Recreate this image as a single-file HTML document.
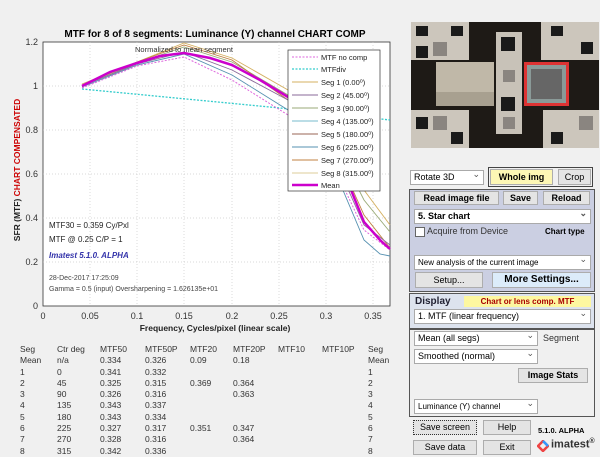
<!DOCTYPE html>
<html><head><style>
body{margin:0;width:600px;height:457px;background:#f0f0f0;font-family:"Liberation Sans",sans-serif;position:relative;overflow:hidden}
.a{position:absolute;white-space:nowrap}
.sel{position:absolute;background:#fff;border:1px solid #aaa;font-size:9px;line-height:13px;padding-left:3px;box-sizing:border-box}
.sel:after{content:"⌄";position:absolute;right:3px;top:-3px;font-size:9px;color:#555}
.btn{position:absolute;background:#e4e4e4;border:1px solid #adadad;font-size:9px;text-align:center;box-sizing:border-box}
.t{position:absolute;font-size:8.5px;color:#333}
</style></head><body>
<svg class="a" style="left:0;top:0" width="405" height="340" font-family="Liberation Sans">
<text x="215" y="37" font-size="10" font-weight="bold" text-anchor="middle">MTF for 8 of 8 segments:  Luminance (Y) channel  CHART COMP</text>
<rect x="43" y="42" width="347" height="264" fill="#fff" stroke="#333" stroke-width="0.8"/>
<g stroke="#ccc" stroke-dasharray="1,2" stroke-width="0.7">
<line x1="90" y1="42" x2="90" y2="306"/><line x1="137" y1="42" x2="137" y2="306"/><line x1="184" y1="42" x2="184" y2="306"/><line x1="232" y1="42" x2="232" y2="306"/><line x1="279" y1="42" x2="279" y2="306"/><line x1="326" y1="42" x2="326" y2="306"/><line x1="373" y1="42" x2="373" y2="306"/>
<line x1="43" y1="86" x2="390" y2="86"/><line x1="43" y1="130" x2="390" y2="130"/><line x1="43" y1="174" x2="390" y2="174"/><line x1="43" y1="218" x2="390" y2="218"/><line x1="43" y1="262" x2="390" y2="262"/></g>
<g font-size="9" fill="#333" text-anchor="end"><text x="38" y="45">1.2</text><text x="38" y="89">1</text><text x="38" y="133">0.8</text><text x="38" y="177">0.6</text><text x="38" y="221">0.4</text><text x="38" y="265">0.2</text><text x="38" y="309">0</text></g>
<g font-size="9" fill="#333" text-anchor="middle"><text x="43" y="319">0</text><text x="90" y="319">0.05</text><text x="137" y="319">0.1</text><text x="184" y="319">0.15</text><text x="232" y="319">0.2</text><text x="279" y="319">0.25</text><text x="326" y="319">0.3</text><text x="373" y="319">0.35</text></g>
<text x="215" y="331" font-size="8.5" font-weight="bold" text-anchor="middle" fill="#222">Frequency, Cycles/pixel (linear scale)</text>
<text transform="translate(20,170) rotate(-90)" font-size="8.5" font-weight="bold" text-anchor="middle"><tspan fill="#222">SFR (MTF)  </tspan><tspan fill="#c00">CHART COMPENSATED</tspan></text>
<polyline fill="none" stroke="#3cc" stroke-width="1.3" stroke-dasharray="2,1.5" points="82,89 280,108 390,120"/>
<polyline fill="none" stroke="#d4b060" stroke-width="0.9" points="82,84 137,62 184,43 232,58 288,90 326,120 364,190 390,225"/>
<polyline fill="none" stroke="#9a7" stroke-width="0.9" points="82,86 137,63 184,47 232,62 288,95 326,125 364,200 390,232"/>
<polyline fill="none" stroke="#c08040" stroke-width="0.9" points="82,85 137,62 184,45 232,60 288,100 326,130 364,215 390,248"/>
<polyline fill="none" stroke="#5590b0" stroke-width="0.9" points="82,87 137,65 184,54 232,75 288,110 326,150 364,240 380,254 390,256"/>
<polyline fill="none" stroke="#8a6a9a" stroke-width="0.9" points="82,86 137,64 184,52 232,70 288,100 326,140 364,225 390,245"/>
<polyline fill="none" stroke="#d6d" stroke-width="1" stroke-dasharray="2,1.5" points="82,88 137,66 184,57 232,80 288,115 326,150 364,230 390,250"/>
<polyline fill="none" stroke="#c0c" stroke-width="2.5" points="82,86 110,72 137,63 160,56 184,53 210,58 232,65 260,80 288,97 310,125 326,141 345,175 364,222 380,240 390,249"/>
<text x="135" y="52" font-size="7.5" fill="#333">Normalized to mean segment</text>
<rect x="288" y="50" width="92" height="141" fill="#fff" stroke="#333" stroke-width="0.7"/>
<g font-size="7.5" fill="#222">
<line x1="292" y1="57" x2="318" y2="57" stroke="#d6d" stroke-dasharray="2,1.5"/><text x="321" y="60">MTF no comp</text>
<line x1="292" y1="69" x2="318" y2="69" stroke="#3cc" stroke-width="1.3" stroke-dasharray="2,1.5"/><text x="321" y="72">MTFdiv</text>
<line x1="292" y1="82" x2="318" y2="82" stroke="#d4b060"/><text x="321" y="85">Seg 1 (0.00⁰)</text>
<line x1="292" y1="95" x2="318" y2="95" stroke="#8a6a9a"/><text x="321" y="98">Seg 2 (45.00⁰)</text>
<line x1="292" y1="108" x2="318" y2="108" stroke="#9a7"/><text x="321" y="111">Seg 3 (90.00⁰)</text>
<line x1="292" y1="121" x2="318" y2="121" stroke="#7bc"/><text x="321" y="124">Seg 4 (135.00⁰)</text>
<line x1="292" y1="134" x2="318" y2="134" stroke="#965"/><text x="321" y="137">Seg 5 (180.00⁰)</text>
<line x1="292" y1="147" x2="318" y2="147" stroke="#5590b0"/><text x="321" y="150">Seg 6 (225.00⁰)</text>
<line x1="292" y1="160" x2="318" y2="160" stroke="#c08040"/><text x="321" y="163">Seg 7 (270.00⁰)</text>
<line x1="292" y1="173" x2="318" y2="173" stroke="#dc9"/><text x="321" y="176">Seg 8 (315.00⁰)</text>
<line x1="292" y1="185" x2="318" y2="185" stroke="#c0c" stroke-width="2.5"/><text x="321" y="188">Mean</text></g>
<text x="49" y="228" font-size="8" fill="#222">MTF30 = 0.359 Cy/Pxl</text>
<text x="49" y="242" font-size="8" fill="#222">MTF @ 0.25 C/P = 1</text>
<text x="49" y="258" font-size="8" fill="#33a" font-weight="bold" font-style="italic">Imatest 5.1.0. ALPHA</text>
<text x="49" y="280" font-size="7" fill="#444">28-Dec-2017 17:25:09</text>
<text x="49" y="291" font-size="7" fill="#444">Gamma = 0.5 (input)  Oversharpening = 1.626135e+01</text>
</svg>
<div class="t" style="left:20px;top:344px;line-height:11.3px">Seg<br>Mean<br>1<br>2<br>3<br>4<br>5<br>6<br>7<br>8</div>
<div class="t" style="left:57px;top:344px;line-height:11.3px">Ctr deg<br>n/a<br>0<br>45<br>90<br>135<br>180<br>225<br>270<br>315</div>
<div class="t" style="left:100px;top:344px;line-height:11.3px">MTF50<br>0.334<br>0.341<br>0.325<br>0.326<br>0.343<br>0.343<br>0.327<br>0.328<br>0.342</div>
<div class="t" style="left:145px;top:344px;line-height:11.3px">MTF50P<br>0.326<br>0.332<br>0.315<br>0.316<br>0.337<br>0.334<br>0.317<br>0.316<br>0.336</div>
<div class="t" style="left:190px;top:344px;line-height:11.3px">MTF20<br>0.09<br>&nbsp;<br>0.369<br>&nbsp;<br>&nbsp;<br>&nbsp;<br>0.351</div>
<div class="t" style="left:233px;top:344px;line-height:11.3px">MTF20P<br>0.18<br>&nbsp;<br>0.364<br>0.363<br>&nbsp;<br>&nbsp;<br>0.347<br>0.364</div>
<div class="t" style="left:278px;top:344px">MTF10</div>
<div class="t" style="left:322px;top:344px">MTF10P</div>
<div class="t" style="left:368px;top:344px;line-height:11.3px">Seg<br>Mean<br>1<br>2<br>3<br>4<br>5<br>6<br>7<br>8</div>

<svg class="a" style="left:411px;top:22px" width="188" height="126">
<rect width="188" height="126" fill="#1e1a16"/>
<rect x="0" y="0" width="58" height="38" fill="#ccc6bc"/><rect x="130" y="0" width="58" height="38" fill="#ccc6bc"/>
<rect x="0" y="88" width="58" height="38" fill="#ccc6bc"/><rect x="132" y="88" width="56" height="38" fill="#ccc6bc"/>
<rect x="85" y="10" width="26" height="102" fill="#c8c2b8"/>
<g fill="#1a1a1a"><rect x="5" y="4" width="12" height="10"/><rect x="40" y="4" width="12" height="10"/><rect x="5" y="24" width="12" height="12"/><rect x="5" y="95" width="12" height="12"/><rect x="40" y="110" width="12" height="12"/><rect x="140" y="4" width="12" height="10"/><rect x="170" y="20" width="12" height="12"/><rect x="140" y="110" width="12" height="12"/><rect x="90" y="15" width="14" height="14"/><rect x="90" y="75" width="14" height="14"/></g>
<g fill="#8a8580"><rect x="22" y="20" width="14" height="14"/><rect x="22" y="94" width="14" height="14"/><rect x="168" y="94" width="14" height="14"/><rect x="92" y="48" width="12" height="12"/><rect x="92" y="95" width="12" height="12"/></g>
<rect x="25" y="40" width="58" height="44" fill="#a8a090"/><rect x="25" y="40" width="58" height="30" fill="#c0b8a8"/>
<rect x="113" y="40" width="45" height="44" fill="#d33"/><rect x="116" y="43" width="39" height="38" fill="#8a9a98"/><rect x="120" y="47" width="31" height="30" fill="#666"/>
</svg>
<div class="sel" style="left:410px;top:170px;width:74px;height:15px">Rotate 3D</div>
<div class="a" style="left:488px;top:167px;width:105px;height:20px;border:1px solid #444;box-sizing:border-box"></div>
<div class="btn" style="left:490px;top:169px;width:63px;height:16px;background:#fdf7b5;font-weight:bold;line-height:14px">Whole img</div>
<div class="btn" style="left:558px;top:169px;width:33px;height:16px;line-height:14px">Crop</div>
<div class="a" style="left:409px;top:189px;width:186px;height:103px;background:#cbcfe2;border:1px solid #555;box-sizing:border-box"></div>
<div class="btn" style="left:414px;top:191px;width:85px;height:14px;font-weight:bold;line-height:12px">Read image file</div>
<div class="btn" style="left:503px;top:191px;width:35px;height:14px;font-weight:bold;line-height:12px">Save</div>
<div class="btn" style="left:543px;top:191px;width:47px;height:14px;font-weight:bold;line-height:12px">Reload</div>
<div class="sel" style="left:414px;top:209px;width:177px;height:15px;font-weight:bold">5. Star chart</div>
<div class="a" style="left:415px;top:227px;width:8px;height:8px;background:#fff;border:1px solid #666"></div>
<div class="a" style="left:427px;top:226px;font-size:9px;color:#333">Acquire from Device</div>
<div class="a" style="left:545px;top:227px;font-size:8px;font-weight:bold">Chart type</div>
<div class="sel" style="left:414px;top:255px;width:177px;height:15px;font-size:8px">New analysis of the current image</div>
<div class="btn" style="left:415px;top:272px;width:68px;height:16px;line-height:14px">Setup...</div>
<div class="btn" style="left:492px;top:272px;width:99px;height:16px;line-height:14px;background:#dcecfa;font-weight:bold;font-size:10px">More Settings...</div>
<div class="a" style="left:409px;top:293px;width:186px;height:36px;background:#dde3ee;border:1px solid #555;box-sizing:border-box"></div>
<div class="a" style="left:415px;top:296px;font-size:10px;font-weight:bold;color:#223">Display</div>
<div class="a" style="left:464px;top:296px;width:127px;height:11px;background:#fdf7a0;font-size:8px;font-weight:bold;color:#a00;text-align:center;line-height:11px">Chart or lens comp. MTF</div>
<div class="sel" style="left:414px;top:309px;width:177px;height:15px">1. MTF (linear frequency)</div>
<div class="a" style="left:409px;top:329px;width:186px;height:88px;border:1px solid #555;box-sizing:border-box"></div>
<div class="sel" style="left:414px;top:331px;width:124px;height:15px">Mean (all segs)</div>
<div class="a" style="left:543px;top:333px;font-size:9px;color:#333">Segment</div>
<div class="sel" style="left:414px;top:349px;width:124px;height:15px">Smoothed (normal)</div>
<div class="btn" style="left:518px;top:368px;width:70px;height:15px;font-weight:bold;line-height:13px">Image Stats</div>
<div class="sel" style="left:414px;top:399px;width:124px;height:15px;font-size:8px">Luminance (Y) channel</div>
<div class="btn" style="left:413px;top:420px;width:64px;height:15px;line-height:13px;border:1px dotted #333">Save screen</div>
<div class="btn" style="left:483px;top:420px;width:48px;height:15px;line-height:13px">Help</div>
<div class="btn" style="left:413px;top:440px;width:64px;height:15px;line-height:13px">Save data</div>
<div class="btn" style="left:483px;top:440px;width:48px;height:15px;line-height:13px">Exit</div>
<div class="a" style="left:538px;top:426px;font-size:7.5px;font-weight:bold">5.1.0. ALPHA</div>
<svg class="a" style="left:537px;top:440px" width="12" height="12"><path d="M6 1 L11 6 L6 11 L1 6Z" fill="none" stroke="#e44" stroke-width="2.5"/><path d="M6 1 L11 6" stroke="#39f" stroke-width="2.5"/></svg>
<div class="a" style="left:551px;top:438px;font-size:11px;font-weight:bold;color:#333">imatest<sup style="font-size:7px">®</sup></div>
</body></html>
